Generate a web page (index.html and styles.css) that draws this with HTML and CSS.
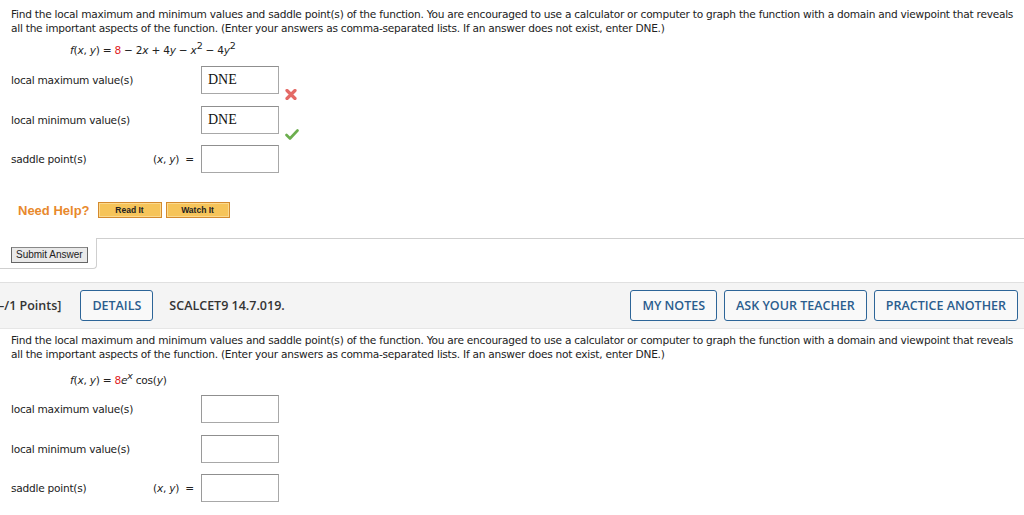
FILE: index.html
```html
<!DOCTYPE html>
<html>
<head>
<meta charset="utf-8">
<link rel="stylesheet" href="styles.css">
</head>
<body>
<section class="question q1">
  <p class="prompt">Find the local maximum and minimum values and saddle point(s) of the function. You are encouraged to use a calculator or computer to graph the function with a domain and viewpoint that reveals all the important aspects of the function. (Enter your answers as comma-separated lists. If an answer does not exist, enter DNE.)</p>
  <p class="func"><i>f</i>(<i>x</i>, <i>y</i>) = <span class="red">8</span> &minus; 2<i>x</i> + 4<i>y</i> &minus; <i>x</i><sup>2</sup> &minus; 4<i>y</i><sup>2</sup></p>
  <div class="answers">
    <span class="label">local maximum value(s)</span><span></span>
    <span class="box">DNE</span>
    <span class="mark"><svg width="12" height="11" viewBox="0 0 12 11"><path d="M2 1.5 L10 9.5 M10 1.5 L2 9.5" stroke="#e46a66" stroke-width="3.2" stroke-linecap="round"/></svg></span>
    <span class="label">local minimum value(s)</span><span></span>
    <span class="box">DNE</span>
    <span class="mark"><svg width="14" height="11" viewBox="0 0 14 11"><path d="M1.5 6 L5 9.5 L12.5 1.5" stroke="#6cae4e" stroke-width="2.6" fill="none" stroke-linecap="round" stroke-linejoin="round"/></svg></span>
    <span class="label">saddle point(s)</span><span class="xy">(<i>x</i>, <i>y</i>) &nbsp;=</span>
    <span class="box"></span><span></span>
  </div>
  <div class="help">
    <span class="need">Need Help?</span>
    <span class="hbtn">Read It</span>
    <span class="hbtn">Watch It</span>
  </div>
</section>
<div class="submit-row">
  <div class="submit-tab"><span class="submit">Submit Answer</span></div>
  <div class="submit-fill"></div>
</div>
<header class="band">
  <span class="points">&ndash;/1 Points]</span>
  <span class="obtn">DETAILS</span>
  <span class="code">SCALCET9 14.7.019.</span>
  <span class="spacer"></span>
  <span class="obtn">MY NOTES</span>
  <span class="obtn">ASK YOUR TEACHER</span>
  <span class="obtn">PRACTICE ANOTHER</span>
</header>
<section class="question q2">
  <p class="prompt">Find the local maximum and minimum values and saddle point(s) of the function. You are encouraged to use a calculator or computer to graph the function with a domain and viewpoint that reveals all the important aspects of the function. (Enter your answers as comma-separated lists. If an answer does not exist, enter DNE.)</p>
  <p class="func"><i>f</i>(<i>x</i>, <i>y</i>) = <span class="red">8</span><i>e</i><sup><i>x</i></sup> cos(<i>y</i>)</p>
  <div class="answers">
    <span class="label">local maximum value(s)</span><span></span>
    <span class="box"></span><span></span>
    <span class="label">local minimum value(s)</span><span></span>
    <span class="box"></span><span></span>
    <span class="label">saddle point(s)</span><span class="xy">(<i>x</i>, <i>y</i>) &nbsp;=</span>
    <span class="box"></span><span></span>
  </div>
</section>
</body>
</html>
```
FILE: styles.css
```css
html, body {
  margin: 0;
  padding: 0;
  background: #fff;
  color: #222;
  font-family: "DejaVu Sans", Verdana, sans-serif;
  font-size: 10.6px;
  overflow: hidden;
}
.question {
  padding: 0 6px 0 11px;
  letter-spacing: -0.25px;
}
.prompt {
  margin: 0;
  line-height: 14px;
}
.q1 { padding-top: 7px; }
.q2 { padding-top: 4px; }
.func {
  margin: 8px 0 0;
  padding-left: 59px;
  line-height: 14px;
}
.q2 .func { margin-top: 12px; }
.func sup {
  line-height: 0;
  font-size: 9.5px;
  vertical-align: 5px;
}
.red { color: #e0201c; }
.answers {
  display: grid;
  grid-template-columns: 142px 48px 78px 20px;
  grid-auto-rows: 28px;
  row-gap: 11.5px;
  align-items: center;
  margin-top: 9px;
}
.q2 .answers { margin-top: 8px; }
.label { line-height: 14px; }
.xy { line-height: 14px; }
.box {
  box-sizing: border-box;
  height: 28px;
  width: 78px;
  border: 1px solid #a8a8a8;
  border-top-color: #8f8f8f;
  border-left-color: #9a9a9a;
  background: #fff;
  font-family: "Liberation Serif", "Times New Roman", serif;
  font-size: 14px;
  letter-spacing: 0;
  color: #111;
  padding: 6px 0 0 6px;
  line-height: 14px;
}
.mark {
  align-self: end;
  margin-left: 6px;
  margin-bottom: -6px;
  line-height: 0;
}
.help {
  display: flex;
  align-items: center;
  gap: 4px;
  margin-top: 29px;
  padding-left: 7px;
  height: 16px;
  letter-spacing: 0;
}
.need {
  font-family: "Liberation Sans", Arial, sans-serif;
  font-weight: bold;
  font-size: 13px;
  color: #e8892c;
  margin-right: 4px;
}
.hbtn {
  box-sizing: border-box;
  height: 16px;
  width: 64px;
  background: #f6c45a;
  border: 1px solid #d48a2e;
  box-shadow: inset 0 0 0 1px #fbd98e;
  font-family: "Liberation Sans", Arial, sans-serif;
  font-weight: bold;
  font-size: 8.5px;
  color: #222;
  text-align: center;
  line-height: 14px;
}
.submit-row {
  display: flex;
  margin-top: 20px;
}
.submit-tab {
  width: 97px;
  height: 31px;
  box-sizing: border-box;
  border-right: 1px solid #cfcfcf;
  border-bottom: 1px solid #cfcfcf;
  border-bottom-right-radius: 4px;
  padding: 9px 0 0 11px;
}
.submit {
  display: inline-block;
  box-sizing: border-box;
  height: 16px;
  padding: 0 4px;
  background: #e9e9e9;
  border: 1px solid #666;
  border-top-color: #888;
  font-family: "Liberation Sans", Arial, sans-serif;
  font-size: 10px;
  color: #222;
  line-height: 14px;
}
.submit-fill {
  flex: 1;
  border-top: 1px solid #cfcfcf;
}
.band {
  display: flex;
  align-items: center;
  gap: 7px;
  margin-top: 13px;
  height: 47px;
  box-sizing: border-box;
  background: #f4f4f4;
  border-top: 1px solid #e0e0e0;
  border-bottom: 1px solid #e6e6e6;
  padding-right: 6px;
  font-family: "Open Sans", "Noto Sans", sans-serif;
  font-weight: 600;
  font-size: 12.5px;
}
.points {
  margin-left: -2px;
  color: #333;
  margin-right: 12px;
}
.obtn {
  box-sizing: border-box;
  height: 31px;
  padding: 0 11px;
  display: flex;
  align-items: center;
  border: 1.5px solid #2d6598;
  border-radius: 3px;
  background: #f9f9f9;
  color: #2a5d8e;
}
.code {
  color: #333;
  margin-left: 9px;
}
.spacer { flex: 1; }
```
